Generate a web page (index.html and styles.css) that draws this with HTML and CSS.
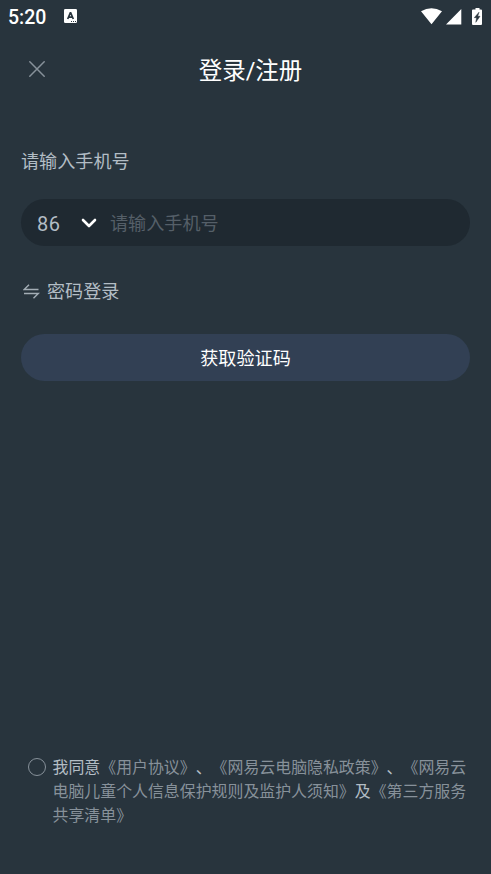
FILE: index.html
```html
<!DOCTYPE html>
<html lang="zh-CN">
<head>
<meta charset="utf-8">
<meta name="viewport" content="width=device-width, initial-scale=1">
<title>登录/注册</title>
<link rel="stylesheet" href="styles.css">
</head>
<body>
<div class="status">
  <span class="time">5:20</span>
  <svg class="app" width="13" height="14" viewBox="0 0 13 14"><rect width="13" height="14" rx="1.3" fill="#fff"/><path d="M3.700 10 6.300 3.800h.4L9.300 10M4.500 8.200h4" fill="none" stroke="#28343d" stroke-width="1.7"/><path d="M7 12.500h1m1 0h1m1 0h1" stroke="#28343d"/></svg>
  <svg class="signals" width="62" height="18" viewBox="0 0 62 18"><path d="M0 3.300Q10.500-3 21 3.300L10.500 16.200ZM25 16.500 40.300 1v15.500Z" fill="#fff"/><path d="M54.500 0h4v1.500h1.500q1 0 1 1V16q0 1-1 1h-8q-1 0-1-1V2.500q0-1 1-1h2.500Z" fill="#fff"/><path d="M58 4.200 53.300 9.700h2.300l-.8 4.600 4.200-6h-2.300Z" fill="#28343d" stroke="#28343d" stroke-width=".5"/></svg>
</div>
<header class="header">
  <svg class="close" width="16" height="16" viewBox="0 0 16 16"><path d="m.8.8 14.400 14.400m0-14.400L.8 15.200"/></svg>
  <h1 class="title">登录/注册</h1>
</header>
<main class="main">
  <label class="label" for="phone">请输入手机号</label>
  <div class="field">
    <span class="code">86</span>
    <svg class="chevron" width="16" height="10" viewBox="0 0 16 10"><path d="m2 2 6 6 6-6"/></svg>
    <input class="input" id="phone" type="tel" placeholder="请输入手机号">
  </div>
  <div class="switch">
    <svg class="swap" width="17" height="15" viewBox="0 0 17 15"><path d="M6 .8 1.200 5.500h14.300M1 9.500h14.300l-4.800 4.700"/></svg>
    <span>密码登录</span>
  </div>
  <button class="submit">获取验证码</button>
</main>
<footer class="agreement">
  <span class="radio"></span>
  <p class="terms">我同意<span class="link">《用户协议》</span>、<span class="link">《网易云电脑隐私政策》</span>、<span class="link">《网易云<br>电脑儿童个人信息保护规则及监护人须知》</span>及<span class="link">《第三方服务<br>共享清单》</span></p>
</footer>
</body>
</html>
```
FILE: styles.css
```css
* { box-sizing: border-box; }
body {
  margin: 0;
  height: 874px;
  display: flex;
  flex-direction: column;
  overflow: hidden;
  background: #28343d;
  color: #b3bdc5;
  font-family: Roboto, "Noto Sans CJK SC", sans-serif;
}
svg { display: block; flex: none; }
.status {
  height: 34px;
  padding: 0 8px 0 8px;
  display: flex;
  align-items: center;
  color: #fff;
}
.time { width: 56px; padding-top: 2px; font-size: 19.5px; font-weight: 500; line-height: 32px; }
.app { margin-bottom: 2px; }
.signals { margin-left: auto; margin-bottom: 1px; }
.header {
  height: 72px;
  padding: 0 29px;
  display: grid;
  grid-template-columns: 16px 1fr 16px;
  align-items: center;
}
.close { margin-bottom: 2px; }
.close path { fill: none; stroke: #87919a; stroke-width: 1.5; stroke-linecap: round; }
.title {
  margin: 0 0 0 10px;
  padding-top: 2px;
  text-align: center;
  font-size: 23.5px;
  font-weight: 400;
  line-height: 34px;
  color: #fff;
}
.main { padding: 43px 21px 0; }
.label { display: block; height: 26px; line-height: 26px; font-size: 18.1px; }
.field {
  margin-top: 24px;
  height: 47px;
  padding-left: 16px;
  display: flex;
  align-items: center;
  border-radius: 24px;
  background: #1f2931;
}
.code { width: 44px; padding-top: 2px; font-size: 20px; letter-spacing: .6px; }
.chevron path { fill: none; stroke: #fff; stroke-width: 2.6; stroke-linecap: round; stroke-linejoin: round; }
.input {
  flex: 1;
  min-width: 0;
  height: 47px;
  margin-left: 13px;
  padding: 2px 0 0;
  border: 0;
  outline: 0;
  background: none;
  color: #b3bdc5;
  font: inherit;
  font-size: 18.1px;
}
.input::placeholder { color: #555f68; opacity: 1; }
.switch {
  height: 26px;
  margin-top: 33px;
  padding-left: 2px;
  display: flex;
  align-items: center;
  gap: 7px;
  font-size: 18.1px;
  line-height: 26px;
}
.swap { margin-bottom: 1px; }
.swap path { fill: none; stroke: #a3adb5; stroke-width: 1.4; }
.submit {
  display: block;
  width: 100%;
  height: 47px;
  margin-top: 29px;
  padding: 0 0 2px;
  border: 0;
  border-radius: 24px;
  background: #324054;
  color: #fff;
  font: inherit;
  font-size: 18.1px;
}
.agreement {
  margin-top: auto;
  padding: 0 20px 46px 28px;
  display: flex;
  gap: 6.5px;
}
.radio {
  flex: none;
  width: 18px;
  height: 18px;
  margin-top: 2px;
  border: 1.5px solid #87919a;
  border-radius: 50%;
}
.terms { margin: 0; font-size: 15.92px; line-height: 24px; white-space: nowrap; text-spacing-trim: space-all; }
.link { color: #87919a; }
```
